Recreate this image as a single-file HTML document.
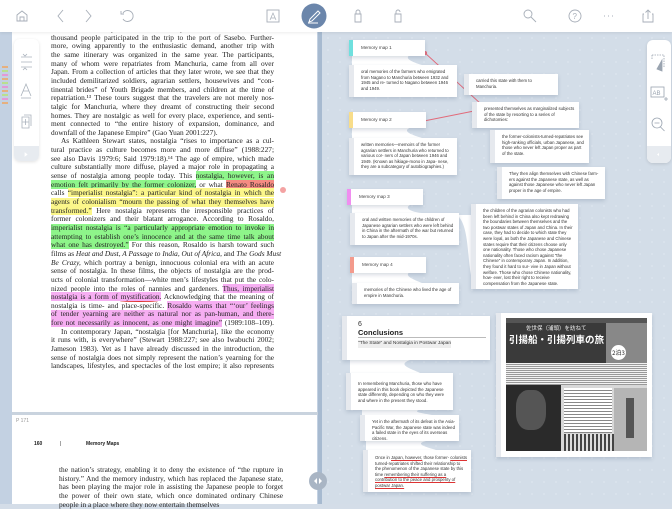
<!DOCTYPE html>
<html><head><meta charset="utf-8">
<style>
*{margin:0;padding:0;box-sizing:border-box}
body{width:672px;height:504px;overflow:hidden;position:relative;background:#d4dde8;font-family:"Liberation Sans",sans-serif}
.abs{position:absolute}
#leftbg{left:0;top:0;width:322px;height:504px;background:#c3d1e2}
#page1{left:12px;top:0;width:305px;height:412px;background:#fff}
#page2{left:12px;top:415px;width:305px;height:89px;background:#fff}
#pline{left:12px;top:412px;width:306px;height:3px;background:#c9d3de}
.tx{position:absolute;left:51px;width:223px;font-family:"Liberation Serif",serif;font-size:7.35px;line-height:8.65px;height:8.65px;color:#222;text-align:justify;text-align-last:justify;white-space:nowrap;overflow:visible}
.g{background:#8ef58a}.y{background:#fbf68a}.p{background:#f6aef2}.r{background:#f58b82}
.ind{padding-left:10px}
#right{left:322px;top:32px;width:350px;height:472px;background-color:#d3dde8;background-image:radial-gradient(circle,#dde5ee 0.7px,transparent 1px);background-size:12px 12px}
#top{left:0;top:0;width:672px;height:32px;background:#fff;box-shadow:0 1px 3px rgba(0,0,0,.08)}
.card{position:absolute;background:#fff;box-shadow:0 2px 4px rgba(60,80,110,.2);font-size:4.3px;line-height:5.6px;color:#333;padding:4px 4px 3px 12px}
.card:before{content:"";position:absolute;left:0;top:0;bottom:0;width:5px;background:#e6e9ee}
.tab{position:absolute;background:#fff;box-shadow:0 2px 4px rgba(60,80,110,.2);font-size:4.6px;color:#444;padding:5px 0 0 12px;height:16px}
.tab i{position:absolute;left:0;top:0;bottom:0;width:4px}
.side{position:absolute;background:#fff;border-radius:6px;box-shadow:0 1px 3px rgba(0,0,0,.12)}
</style></head><body>
<div id="leftbg" class="abs"></div>
<div class="abs" style="left:2px;top:66px;width:6px;height:40px;background:repeating-linear-gradient(#e6b07f 0 2px,transparent 2px 4px,#b9e08e 4px 6px,transparent 6px 8px,#e49ad6 8px 10px,transparent 10px 12px)"></div>
<div id="page1" class="abs"></div>
<div id="pline" class="abs"></div>
<div id="page2" class="abs"></div>
<div class="abs" style="left:318px;top:32px;width:4px;height:472px;background:#a7bad0"></div>

<div class="tx" style="top:25px">This travel itinerary turned out to be quite successful: more than a</div>
<div class="tx" style="top:33.6px">thousand people participated in the trip to the port of Sasebo. Further-</div>
<div class="tx" style="top:42.3px">more, owing apparently to the enthusiastic demand, another trip with</div>
<div class="tx" style="top:50.9px">the same itinerary was organized in the same year. The participants,</div>
<div class="tx" style="top:59.6px">many of whom were repatriates from Manchuria, came from all over</div>
<div class="tx" style="top:68.2px">Japan. From a collection of articles that they later wrote, we see that they</div>
<div class="tx" style="top:76.9px">included demilitarized soldiers, agrarian settlers, housewives and “con-</div>
<div class="tx" style="top:85.5px">tinental brides” of Youth Brigade members, and children at the time of</div>
<div class="tx" style="top:94.2px">repatriation.¹³ These tours suggest that the travelers are not merely nos-</div>
<div class="tx" style="top:102.8px">talgic for Manchuria, where they dreamt of constructing their second</div>
<div class="tx" style="top:111.5px">homes. They are nostalgic as well for every place, experience, and senti-</div>
<div class="tx" style="top:120.1px">ment connected to “the entire history of expansion, dominance, and</div>
<div class="tx" style="top:128.8px;text-align-last:left">downfall of the Japanese Empire” (Gao Yuan 2001:227).</div>
<div class="tx ind" style="top:137.4px">As Kathleen Stewart states, nostalgia “rises to importance as a cul-</div>
<div class="tx" style="top:146.1px">tural practice as culture becomes more and more diffuse” (1988:227;</div>
<div class="tx" style="top:154.7px">see also Davis 1979:6; Said 1979:18).¹⁴ The age of empire, which made</div>
<div class="tx" style="top:163.4px">culture substantially more diffuse, played a major role in propagating a</div>
<div class="tx" style="top:172px">sense of nostalgia among people today. This <span class="g">nostalgia, however, is an</span></div>
<div class="tx" style="top:180.7px"><span class="g">emotion felt primarily by the former colonizer,</span> or what <span class="r">Renato Rosaldo</span></div>
<div class="tx" style="top:189.3px">calls <span class="y">“imperialist nostalgia”: a particular kind of nostalgia in which the</span></div>
<div class="tx y" style="top:198px">agents of colonialism “mourn the passing of what they themselves have</div>
<div class="tx" style="top:206.6px"><span class="y">transformed.”</span> Here nostalgia represents the irresponsible practices of</div>
<div class="tx" style="top:215.3px">former colonizers and their blatant arrogance. According to Rosaldo,</div>
<div class="tx g" style="top:223.9px">imperialist nostalgia is “a particularly appropriate emotion to invoke in</div>
<div class="tx g" style="top:232.6px">attempting to establish one’s innocence and at the same time talk about</div>
<div class="tx" style="top:241.2px"><span class="g">what one has destroyed.”</span> For this reason, Rosaldo is harsh toward such</div>
<div class="tx" style="top:249.9px">films as <i>Heat and Dust, A Passage to India, Out of Africa,</i> and <i>The Gods Must</i></div>
<div class="tx" style="top:258.5px"><i>Be Crazy,</i> which portray a benign, innocuous colonial era with an acute</div>
<div class="tx" style="top:267.2px">sense of nostalgia. In these films, the objects of nostalgia are the prod-</div>
<div class="tx" style="top:275.8px">ucts of colonial transformation—white men’s lifestyles that put the colo-</div>
<div class="tx" style="top:284.5px">nized people into the roles of nannies and gardeners. <span class="p">Thus, imperialist</span></div>
<div class="tx" style="top:293.1px"><span class="p">nostalgia is a form of mystification.</span> Acknowledging that the meaning of</div>
<div class="tx" style="top:301.8px">nostalgia is time- and place-specific. <span class="p">Rosaldo warns that “‘our’ feelings</span></div>
<div class="tx p" style="top:310.4px">of tender yearning are neither as natural nor as pan-human, and there-</div>
<div class="tx" style="top:319.1px"><span class="p">fore not necessarily as innocent, as one might imagine”</span> (1989:108–109).</div>
<div class="tx ind" style="top:327.7px">In contemporary Japan, “nostalgia [for Manchuria], like the economy</div>
<div class="tx" style="top:336.4px">it runs with, is everywhere” (Stewart 1988:227; see also Iwabuchi 2002;</div>
<div class="tx" style="top:345px">Jameson 1983). Yet as I have already discussed in the introduction, the</div>
<div class="tx" style="top:353.7px">sense of nostalgia does not simply represent the nation’s yearning for the</div>
<div class="tx" style="top:362.3px">landscapes, lifestyles, and spectacles of the lost empire; it also represents</div>
<div class="abs" style="left:120px;top:300px;width:38px;height:2px;border-bottom:1px solid #d33;border-radius:50%"></div>
<div class="abs" style="left:280px;top:187px;width:6px;height:6px;border-radius:50%;background:#f4a3a3"></div>

<div class="abs" style="left:16px;top:418px;font-size:5px;color:#999">P 171</div>
<div class="abs" style="left:34px;top:441px;font-size:5px;color:#222;font-weight:bold">160</div>
<div class="abs" style="left:60px;top:441px;font-size:5px;color:#222">|</div>
<div class="abs" style="left:86px;top:441px;font-size:5px;color:#222;font-weight:bold">Memory Maps</div>
<div class="tx" style="left:59px;width:224px;top:466px">the nation’s strategy, enabling it to deny the existence of “the rupture in</div>
<div class="tx" style="left:59px;width:224px;top:474.7px">history.” And the memory industry, which has replaced the Japanese state,</div>
<div class="tx" style="left:59px;width:224px;top:483.3px">has been playing the major role in assisting the Japanese people to forget</div>
<div class="tx" style="left:59px;width:224px;top:492px">the power of their own state, which once dominated ordinary Chinese</div>
<div class="tx" style="left:59px;width:224px;top:500.6px;text-align-last:left">people in a place where they now entertain themselves</div>

<!-- left tool panel -->
<div class="side" style="left:14px;top:39px;width:25px;height:122px"></div>
<div class="abs" style="left:14px;top:146px;width:25px;height:15px;background:#e7ebf0;border-radius:0 0 6px 6px"></div>
<svg class="abs" style="left:14px;top:39px" width="25" height="122" viewBox="0 0 25 122" fill="none" stroke="#aab2bc" stroke-width="0.8">
<path d="M7 18h11M7 23h11M7 28h11M9 15l2 2 2-2M9 31l2-2 2 2"/>
<path d="M7 57l5-12 5 12M9 52h6"/><path d="M7 59h10"/>
<path d="M8 78h7v11h-7zM10 76h7v11"/><path d="M11.5 80v6M8.5 83h6"/>
<path d="M11 114l2 1.5-2 1.5z" fill="#fff" stroke="#fff"/>
</svg>

<div id="right" class="abs"></div>
<svg class="abs" style="left:322px;top:32px" width="350" height="472" viewBox="322 32 350 472">
<g fill="#fff">
<path d="M352 54h60c-10 4 0 8 10 11h-70z"/>
<path d="M352 127h60c-12 4 0 8 10 11h-70z"/>
<path d="M352 204h60c-10 4 0 8 10 9h-70z"/>
<path d="M352 271h60c-10 4 0 8 10 12h-70z"/>
<path d="M350 360h60c-14 5 2 9 10 13h-70z"/>
<path d="M362 409h60c-12 3 0 4 10 6h-70z"/>
<path d="M366 441h60c-12 3 0 6 10 9h-70z"/>
<path d="M457 215c12 10 10 40 14 60v-60z"/>
</g>
<g stroke="#e26a7a" stroke-width="0.9" fill="#e6707e">
<path d="M425 53L481 104M424 121L474 111" fill="none"/>
<circle cx="425" cy="53" r="1.6"/><circle cx="481" cy="104" r="1.6"/><circle cx="424" cy="121" r="1.6"/><circle cx="474" cy="111" r="1.6"/>
</g>
</svg>

<div class="tab" style="left:349px;top:40px;width:76px">Memory map 1<i style="background:#6fe0de"></i></div>
<div class="card" style="left:349px;top:65px;width:108px;height:32px">oral memories of the farmers who emigrated from Nagano to Manchuria between 1932 and 1945 and re- turned to Nagano between 1946 and 1949.</div>
<div class="card" style="left:464px;top:74px;width:94px;height:21px">carried this state with them to Manchuria.</div>
<div class="card" style="left:472px;top:102px;width:107px;height:26px">presented themselves as marginalized subjects of the state by resorting to a series of dichotomies:</div>
<div class="tab" style="left:349px;top:112px;width:77px">Memory map 2<i style="background:#f8dd8a"></i></div>
<div class="card" style="left:349px;top:138px;width:108px;height:37px">written memories—memoirs of the former agrarian settlers in Manchuria who returned to various cor- ners of Japan between 1946 and 1949. (Known as hikiage-mono in Japa- nese, they are a subcategory of autobiographies.)</div>
<div class="card" style="left:490px;top:130px;width:99px;height:33px">the former-colonists-turned-repatriates see high-ranking officials, urban Japanese, and those who never left Japan proper as part of the state.</div>
<div class="card" style="left:497px;top:167px;width:108px;height:32px">They then align themselves with Chinese farm- ers against the Japanese state, as well as against those Japanese who never left Japan proper in the age of empire.</div>
<div class="tab" style="left:347px;top:189px;width:76px">Memory map 3<i style="background:#f08ef0"></i></div>
<div class="card" style="left:350px;top:213px;width:109px;height:32px">oral and written memories of the children of Japanese agrarian settlers who were left behind in China in the aftermath of the war but returned to Japan after the mid-1970s.</div>
<div class="card" style="left:471px;top:204px;width:107px;height:85px">the children of the agrarian colonists who had been left behind in China also kept redrawing the boundaries between themselves and the two postwar states of Japan and China. In their case, they had to decide to which state they were loyal, as both the Japanese and Chinese states require that their citizens choose only one nationality. Those who chose Japanese nationality often faced racism against "the Chinese" in contemporary Japan. In addition, they found it hard to sur- vive in Japan without welfare. Those who chose Chinese nationality, how- ever, lost their right to receive compensation from the Japanese state.</div>
<div class="tab" style="left:350px;top:257px;width:76px">Memory map 4<i style="background:#f39a8c"></i></div>
<div class="card" style="left:352px;top:283px;width:107px;height:21px">memories of the Chinese who lived the age of empire in Manchuria.</div>
<div class="card" style="left:342px;top:316px;width:148px;height:44px;padding-left:16px">
<div style="font-size:7px;line-height:7px;margin-top:1px">6</div>
<div style="font-size:7.5px;line-height:9px;font-weight:bold;color:#222;border-bottom:0.6px solid #bbb">Conclusions</div>
<div style="font-size:4.8px;line-height:8px;color:#333;background:#eee;display:inline-block;margin-top:2px">"The State" and Nostalgia in Postwar Japan</div></div>
<div class="card" style="left:346px;top:373px;width:107px;height:37px;padding-top:8px">In remembering Manchuria, those who have appeared in this book depicted the Japanese state differently, depending on who they were and where in the present they stood.</div>
<div class="card" style="left:360px;top:415px;width:99px;height:26px">Yet in the aftermath of its defeat in the Asia-Pacific War, the Japanese state was indeed a failed state in the eyes of its overseas citizens.</div>
<div class="card" style="left:363px;top:450px;width:108px;height:42px;padding-top:5px">Once in <u style="text-decoration-color:#d33">Japan, however,</u> those former- <u style="text-decoration-color:#d33">colonists</u> turned-repatriates shifted their relationship to the phenomenon of the Japanese state by this time <u style="text-decoration-color:#d33">remembering their suffering as a contribution to the peace and prosperity of postwar Japan.</u></div>
<div class="card" style="left:496px;top:313px;width:156px;height:144px;padding:0"></div>
<div class="abs" style="left:506px;top:318px;width:141px;height:133px;background:#d8d8d8;overflow:hidden;font-family:'Noto Sans CJK JP',sans-serif">
<div class="abs" style="left:0;top:0;width:141px;height:5px;background:#555"></div>
<div class="abs" style="left:0;top:5px;width:100px;height:40px;background:#3a3a3a"></div>
<div class="abs" style="left:100px;top:5px;width:41px;height:40px;background:#888"></div>
<div class="abs" style="left:20px;top:6px;font-size:5.5px;color:#eee;white-space:nowrap">佐世保（浦頭）を訪ねて</div>
<div class="abs" style="left:3px;top:14px;font-size:9.5px;color:#fff;font-weight:bold;white-space:nowrap">引揚船・引揚列車の旅</div>
<div class="abs" style="left:105px;top:27px;width:15px;height:15px;border-radius:50%;background:#fff;font-size:6px;color:#222;text-align:center;line-height:15px">2泊3日</div>
<div class="abs" style="left:0;top:45px;width:141px;height:22px;background:repeating-linear-gradient(#f2f2f2 0 1px,#999 1px 2px)"></div>
<div class="abs" style="left:0;top:67px;width:55px;height:66px;background:#2a2a2a"></div>
<div class="abs" style="left:10px;top:72px;width:30px;height:40px;border-radius:40%;background:#555"></div>
<div class="abs" style="left:58px;top:70px;width:48px;height:45px;background:repeating-linear-gradient(#fff 0 2px,#888 2px 3px)"></div>
<div class="abs" style="left:108px;top:70px;width:33px;height:63px;background:#b5b5b5"></div>
<div class="abs" style="left:120px;top:80px;width:8px;height:40px;background:#555"></div>
<div class="abs" style="left:58px;top:116px;width:50px;height:17px;background:repeating-linear-gradient(90deg,#444 0 2px,#ddd 2px 4px)"></div>
</div>

<!-- right tool panel -->
<div class="side" style="left:647px;top:40px;width:24px;height:123px"></div>
<div class="abs" style="left:647px;top:146px;width:24px;height:17px;background:#e7ebf0;border-radius:0 0 6px 6px"></div>
<svg class="abs" style="left:647px;top:40px" width="24" height="123" viewBox="0 0 24 123" fill="none" stroke="#9aa4b0" stroke-width="0.8">
<path d="M5 15h12v12M5 15v4" stroke-dasharray="1.5 1"/><path d="M10 29l5-9v11z" fill="#9aa4b0"/>
<rect x="4" y="47" width="13" height="10"/><text x="5.5" y="55" font-size="6" fill="#9aa4b0" stroke="none" font-family="Liberation Sans">AB</text><path d="M17 59h4M19 57v4"/>
<circle cx="10" cy="83" r="5"/><path d="M7.5 83h5M13.5 87l4 4"/>
<path d="M12 113l-2 1.5 2 1.5z" fill="#fff" stroke="none"/>
</svg>

<!-- top bar -->
<div id="top" class="abs"></div>
<svg class="abs" style="left:0;top:0" width="672" height="32" viewBox="0 0 672 32" fill="none" stroke="#a7aeb8" stroke-width="0.9">
<path d="M17 21v-6l5-4 5 4v6zM20 21v-4h4v4"/>
<path d="M63 10l-5 6 5 6M86 10l5 6-5 6"/>
<path d="M123 13a5.5 5.5 0 1 1 0 6M121 11v3h3"/>
<rect x="267" y="10" width="12" height="12"/><path d="M270 20l3-7 3 7M271 18h4" stroke-width="0.7"/>
<circle cx="314" cy="16" r="12.5" fill="#6b86ab" stroke="none"/>
<path d="M309 22l1-3 8-8 2 2-8 8zM308 23h10" stroke="#fff" stroke-width="1"/>
<path d="M355 14h6v8h-6zM356 14v-2a2 2 0 0 1 4 0v2"/>
<path d="M395 14h6v8h-6zM396 14v-2a2 2 0 0 1 4 0"/>
<circle cx="528" cy="14" r="4"/><path d="M531 17l5 5"/>
<circle cx="575" cy="16" r="6"/><text x="572.5" y="19" font-size="8" fill="#a7aeb8" stroke="none" font-family="Liberation Sans">?</text>
<path d="M604 16h1M608 16h1M612 16h1"/>
<path d="M644 14h-1v8h10v-8h-1M648 19v-9M645.5 12.5l2.5-2.5 2.5 2.5"/>
</svg>
<div class="abs" style="left:309px;top:472px;width:18px;height:18px;border-radius:50%;background:#a9b5c4"></div>
<svg class="abs" style="left:309px;top:472px" width="18" height="18"><path d="M8 6l-3 3 3 3zM10 6l3 3-3 3z" fill="#fff"/></svg>
</body></html>
